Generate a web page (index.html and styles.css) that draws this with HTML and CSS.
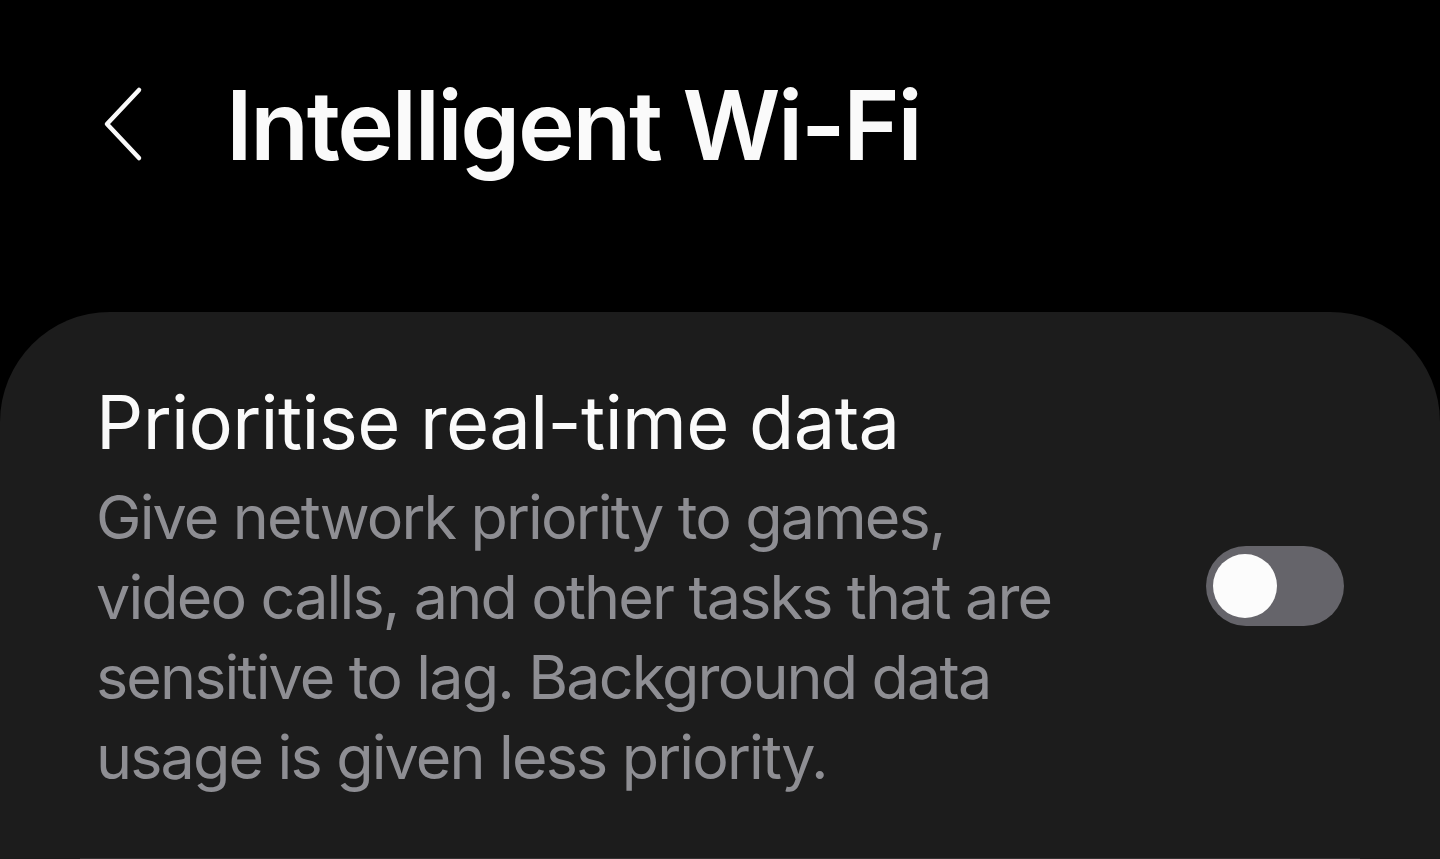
FILE: index.html
```html
<!DOCTYPE html>
<html lang="en">
<head>
<meta charset="utf-8">
<title>Intelligent Wi-Fi</title>
<link rel="stylesheet" href="styles.css">
</head>
<body>
<header class="appbar">
  <button class="back" aria-label="Back">
    <svg width="44" height="80" viewBox="0 0 44 80"><path d="M37 5 L5 39 L37 73" fill="none" stroke="#fafafa" stroke-width="4.5" stroke-linecap="round" stroke-linejoin="round"/></svg>
  </button>
  <h1 class="title">Intelligent Wi-Fi</h1>
</header>
<main class="card">
  <div class="row">
    <div class="text">
      <div class="row-title">Prioritise real-time data</div>
      <div class="row-desc">Give network priority to games, video calls, and other tasks that are sensitive to lag. Background data usage is given less priority.</div>
    </div>
    <div class="switch" role="switch" aria-checked="false"><span class="knob"></span></div>
  </div>
  <div class="divider"></div>
</main>
</body>
</html>
```
FILE: styles.css
```css
html, body {
  margin: 0;
  padding: 0;
  background: #000;
  height: 100%;
  overflow: hidden;
}
body {
  font-family: Inter, "Noto Sans", sans-serif;
  color: #fafafa;
}
.appbar {
  display: flex;
  align-items: center;
  height: 250px;
  padding-left: 102px;
}
.back {
  background: none;
  border: 0;
  padding: 0;
  width: 44px;
  height: 80px;
  display: flex;
}
.title {
  margin: 0 0 0 80px;
  font-size: 96px;
  font-weight: 600;
  letter-spacing: -2.3px;
  line-height: 1;
}
.card {
  margin-top: 62px;
  background: #1c1c1c;
  border-radius: 110px 110px 0 0;
  height: 547px;
  display: flex;
  flex-direction: column;
}
.row {
  display: flex;
  align-items: center;
  padding: 65px 96px 0 96px;
}
.text {
  flex: 1;
  max-width: 1000px;
}
.row-title {
  font-size: 74px;
  line-height: 90px;
  letter-spacing: -0.6px;
  color: #fafafa;
}
.row-desc {
  margin-top: 10px;
  font-size: 61px;
  line-height: 80px;
  letter-spacing: -1.85px;
  color: #8e8e93;
}
.switch {
  margin-left: auto;
  width: 138px;
  height: 80px;
  border-radius: 40px;
  background: #65646a;
  display: flex;
  align-items: center;
  padding-left: 7px;
  box-sizing: border-box;
  margin-top: -2px;
}
.knob {
  width: 64px;
  height: 64px;
  border-radius: 50%;
  background: #fcfcfc;
}
.divider {
  margin: auto 80px 0 80px;
  height: 1px;
  background: #333;
}
```
